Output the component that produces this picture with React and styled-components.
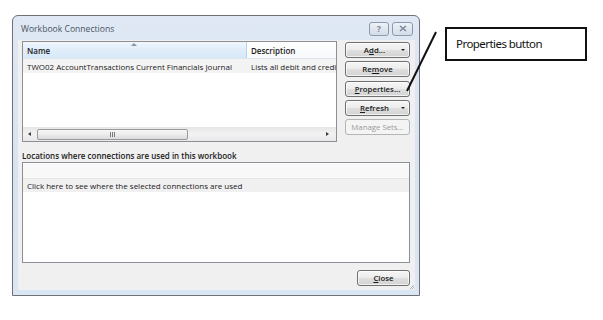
import React from "react";
import styled, { createGlobalStyle, css } from "styled-components";

const GlobalStyle = createGlobalStyle`
  html, body { margin: 0; padding: 0; background: #ffffff; }
  body { font-family: "Open Sans", "Noto Sans", Arial, sans-serif; }
  * { box-sizing: border-box; }
`;

const Page = styled.div`
  position: relative;
  width: 603px;
  height: 320px;
  display: flex;
  align-items: flex-start;
  padding: 15px 0 0 12px;
  overflow: hidden;
`;

const Dialog = styled.div`
  width: 408px;
  height: 281px;
  border: 1px solid #6f7174;
  border-radius: 6px 6px 0 0;
  background: linear-gradient(180deg, #dfe8f4 0%, #d6e3f2 60%, #dbe6f4 100%);
  display: flex;
  flex-direction: column;
`;

const TitleBar = styled.div`
  height: 24px;
  display: flex;
  align-items: center;
  justify-content: space-between;
  padding: 1px 6px 0 8px;
`;

const Title = styled.span`
  font-size: 8.6px;
  color: #4a5462;
`;

const TitleButtons = styled.div`
  display: flex;
  gap: 3px;
`;

const CaptionButton = styled.div`
  width: ${(p) => p.$w}px;
  height: 14px;
  border: 1px solid #8e9aab;
  border-radius: 3px;
  background: linear-gradient(180deg, #eef2f8 0%, #dfe6ef 50%, #d3dce8 100%);
  display: flex;
  align-items: center;
  justify-content: center;
  font-size: 9px;
  font-weight: 700;
  color: #7e8796;
  line-height: 1;
`;

const Client = styled.div`
  position: relative;
  flex: 1;
  margin: 0 4px 5px 5px;
  background: #f0f0f0;
  padding: 1px 5px 0 4px;
  display: flex;
  flex-direction: column;
  font-size: 8px;
  color: #1a1a1a;
`;

const TopSection = styled.div`
  display: flex;
  gap: 8px;
`;

const ListView = styled.div`
  width: ${(p) => p.$w}px;
  height: 101px;
  border: 1px solid #8c9096;
  background: #ffffff;
  display: flex;
  flex-direction: column;
`;

const HeaderRow = styled.div`
  display: flex;
  height: 17px;
  border-bottom: 1px solid #e2e6ea;
`;

const HeaderCell = styled.div`
  position: relative;
  width: ${(p) => (p.$w ? `${p.$w}px` : "auto")};
  flex: ${(p) => (p.$w ? "none" : 1)};
  display: flex;
  align-items: center;
  padding-left: 4px;
  font-weight: 600;
  overflow: hidden;
  white-space: nowrap;
  ${(p) =>
    p.$sorted
      ? css`
          background: linear-gradient(180deg, #f0f7fd 0%, #e1eefa 45%, #d7e8f8 100%);
          border-right: 1px solid #b9d3ec;
        `
      : css`
          background: linear-gradient(180deg, #ffffff 0%, #f7f8f9 100%);
        `}
`;

const SortArrow = styled.span`
  position: absolute;
  top: 1px;
  left: 108px;
  width: 0;
  height: 0;
  border-left: 3px solid transparent;
  border-right: 3px solid transparent;
  border-bottom: 3px solid #8a96a6;
`;

const DataRow = styled.div`
  display: flex;
  height: 14px;
  background: ${(p) => p.$bg || "transparent"};
  border-top: ${(p) => (p.$line ? "1px solid #e4e4e4" : "none")};
  align-items: center;
  white-space: nowrap;
`;

const DataCell = styled.div`
  width: ${(p) => (p.$w ? `${p.$w}px` : "auto")};
  flex: ${(p) => (p.$w ? "none" : 1)};
  padding-left: 4px;
  overflow: hidden;
`;

const Spacer = styled.div`
  flex: 1;
`;

const HScroll = styled.div`
  height: 14px;
  display: flex;
  align-items: center;
  background: linear-gradient(180deg, #e6e6e6 0%, #f2f2f2 50%, #e8e8e8 100%);
  padding: 0 3px;
`;

const ArrowGlyph = styled.span`
  width: 0;
  height: 0;
  border-top: 2.5px solid transparent;
  border-bottom: 2.5px solid transparent;
  ${(p) =>
    p.$dir === "left"
      ? css`border-right: 3px solid #3a3a3a; margin: 0 6px 0 2px;`
      : css`border-left: 3px solid #3a3a3a; margin-left: auto; margin-right: 4px;`}
`;

const Thumb = styled.div`
  width: 151px;
  height: 11px;
  border: 1px solid #9b9b9b;
  border-radius: 2px;
  background: linear-gradient(180deg, #f7f7f7 0%, #ececec 50%, #dadada 100%);
  display: flex;
  align-items: center;
  justify-content: center;
  gap: 1px;
`;

const GripLine = styled.span`
  width: 1px;
  height: 5px;
  background: #7a7a7a;
`;

const ButtonColumn = styled.div`
  width: 65px;
  display: flex;
  flex-direction: column;
  gap: 3.3px;
  padding-top: 1px;
`;

const Button = styled.div`
  position: relative;
  width: ${(p) => p.$w || 65}px;
  height: 16px;
  border: 1px solid ${(p) => (p.$disabled ? "#b3b6b9" : "#707070")};
  border-radius: 3px;
  background: ${(p) =>
    p.$disabled
      ? "#f4f4f4"
      : "linear-gradient(180deg, #f6f6f6 0%, #ececec 48%, #dfdfdf 52%, #d2d2d2 100%)"};
  box-shadow: ${(p) => (p.$disabled ? "none" : "inset 0 0 0 1px rgba(255,255,255,0.7)")};
  display: flex;
  align-items: center;
  justify-content: center;
  font-size: 7.8px;
  font-weight: ${(p) => (p.$disabled ? 400 : 600)};
  color: ${(p) => (p.$disabled ? "#9a9a9a" : "#1a1a1a")};
  padding-right: ${(p) => (p.$drop ? 6 : 0)}px;
  u { text-decoration: underline; text-underline-offset: 1px; }
`;

const DropArrow = styled.span`
  position: absolute;
  right: 4px;
  top: 6px;
  width: 0;
  height: 0;
  border-left: 2px solid transparent;
  border-right: 2px solid transparent;
  border-top: 2.5px solid #222;
`;

const SectionLabel = styled.div`
  margin-top: 9px;
  height: 10px;
  line-height: 10px;
  font-weight: 600;
  white-space: nowrap;
`;

const LocationsList = styled(ListView)`
  width: 388px;
  margin-top: 1px;
  padding-top: 1px;
`;

const Footer = styled.div`
  display: flex;
  justify-content: flex-end;
  margin-top: 7px;
`;

const ResizeGrip = styled.svg`
  position: absolute;
  right: 0;
  bottom: 0;
`;

const Callout = styled.div`
  margin: 12px 0 0 25px;
  width: 142px;
  height: 34px;
  border: 2px solid #111;
  display: flex;
  align-items: center;
  padding: 0 0 2px 9px;
  font-family: "Noto Sans", "Open Sans", sans-serif;
  font-size: 11.5px;
  letter-spacing: -0.55px;
  color: #111;
  white-space: nowrap;
`;

const Leader = styled.svg`
  position: absolute;
  left: 0;
  top: 0;
  pointer-events: none;
`;

export default function App() {
  return (
    <>
      <GlobalStyle />
      <Page>
        <Dialog>
          <TitleBar>
            <Title>Workbook Connections</Title>
            <TitleButtons>
              <CaptionButton $w={20}>?</CaptionButton>
              <CaptionButton $w={21}>
                <svg width="8" height="7" viewBox="0 0 8 7">
                  <path d="M1 1 L7 6 M7 1 L1 6" stroke="#7e8796" strokeWidth="1.6" />
                </svg>
              </CaptionButton>
            </TitleButtons>
          </TitleBar>
          <Client>
            <TopSection>
              <ListView $w={315}>
                <HeaderRow>
                  <HeaderCell $w={224} $sorted>
                    Name
                    <SortArrow />
                  </HeaderCell>
                  <HeaderCell>Description</HeaderCell>
                </HeaderRow>
                <DataRow $bg="#f3f3f3">
                  <DataCell $w={224}>TWO02 AccountTransactions Current Financials Journal</DataCell>
                  <DataCell>Lists all debit and credi</DataCell>
                </DataRow>
                <Spacer />
                <HScroll>
                  <ArrowGlyph $dir="left" />
                  <Thumb>
                    <GripLine />
                    <GripLine />
                    <GripLine />
                  </Thumb>
                  <ArrowGlyph $dir="right" />
                </HScroll>
              </ListView>
              <ButtonColumn>
                <Button $drop>
                  <span>A<u>d</u>d...</span>
                  <DropArrow />
                </Button>
                <Button>
                  <span>Re<u>m</u>ove</span>
                </Button>
                <Button>
                  <span><u>P</u>roperties...</span>
                </Button>
                <Button $drop>
                  <span><u>R</u>efresh</span>
                  <DropArrow />
                </Button>
                <Button $disabled>Manage Sets...</Button>
              </ButtonColumn>
            </TopSection>
            <SectionLabel>Locations where connections are used in this workbook</SectionLabel>
            <LocationsList>
              <DataRow $bg="#f8f8f8" />
              <DataRow $bg="#f0f0f0" $line>
                <DataCell>Click here to see where the selected connections are used</DataCell>
              </DataRow>
            </LocationsList>
            <Footer>
              <Button $w={53}>
                <span><u>C</u>lose</span>
              </Button>
            </Footer>
            <ResizeGrip width="6" height="6" viewBox="0 0 6 6">
              <path d="M5 1 L1 5 M5 3 L3 5" stroke="#9aa3ad" strokeWidth="0.8" />
            </ResizeGrip>
          </Client>
        </Dialog>
        <Callout>Properties button</Callout>
        <Leader width="603" height="320">
          <line x1="436" y1="32" x2="407" y2="91" stroke="#111" strokeWidth="2" />
        </Leader>
      </Page>
    </>
  );
}
